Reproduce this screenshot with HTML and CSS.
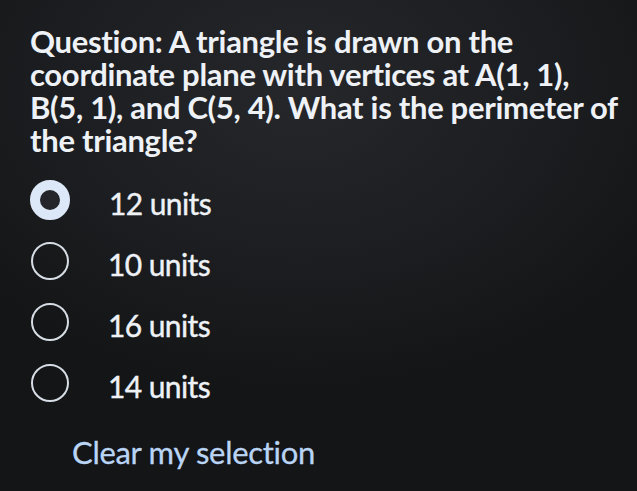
FILE: index.html
```html
<!DOCTYPE html>
<html>
<head>
<meta charset="utf-8">
<link rel="stylesheet" href="styles.css">
</head>
<body>
<main class="quiz">
  <p class="question">Question: A triangle is drawn on the coordinate plane with vertices at A(1,&nbsp;1), B(5,&nbsp;1), and C(5,&nbsp;4). What is the perimeter of the triangle?</p>
  <ul class="options">
    <li class="option selected"><span class="radio"></span><span class="label">12 units</span></li>
    <li class="option"><span class="radio"></span><span class="label">10 units</span></li>
    <li class="option"><span class="radio"></span><span class="label">16 units</span></li>
    <li class="option"><span class="radio"></span><span class="label">14 units</span></li>
  </ul>
  <div class="clear">Clear my selection</div>
</main>
</body>
</html>
```
FILE: styles.css
```css
html, body {
  margin: 0;
  padding: 0;
}
body {
  width: 637px;
  height: 491px;
  overflow: hidden;
  background: radial-gradient(ellipse 420px 300px at 300px 90px, #26272a 0%, #1c1d20 60%, #141516 100%);
  font-family: Lato, "Noto Sans", sans-serif;
  color: #eef2f6;
}
.quiz {
  padding: 25px 0 0 30px;
}
.question {
  margin: 0;
  width: 600px;
  font-size: 31px;
  font-weight: 700;
  line-height: 33px;
  letter-spacing: -0.3px;
}
.options {
  list-style: none;
  margin: 23px 0 0 0;
  padding: 0;
  display: flex;
  flex-direction: column;
  gap: 21px;
}
.option {
  display: flex;
  align-items: center;
  height: 40px;
}
.radio {
  box-sizing: border-box;
  width: 38px;
  height: 38px;
  border-radius: 50%;
  border: 2.5px solid #d6dde5;
  margin-left: 1px;
  flex: none;
}
.selected .radio {
  width: 40px;
  height: 40px;
  margin-left: 0;
  border: 10px solid #dce8f7;
  background: #23252a;
}
.label {
  margin-left: 39px;
  padding-top: 6px;
  font-size: 30px;
  font-weight: 400;
  letter-spacing: -0.6px;
  -webkit-text-stroke: 0.4px #eef2f6;
}
.clear {
  margin: 30px 0 0 42px;
  font-size: 31px;
  color: #b9d4f5;
  letter-spacing: -0.3px;
  -webkit-text-stroke: 0.3px #b9d4f5;
}
```
